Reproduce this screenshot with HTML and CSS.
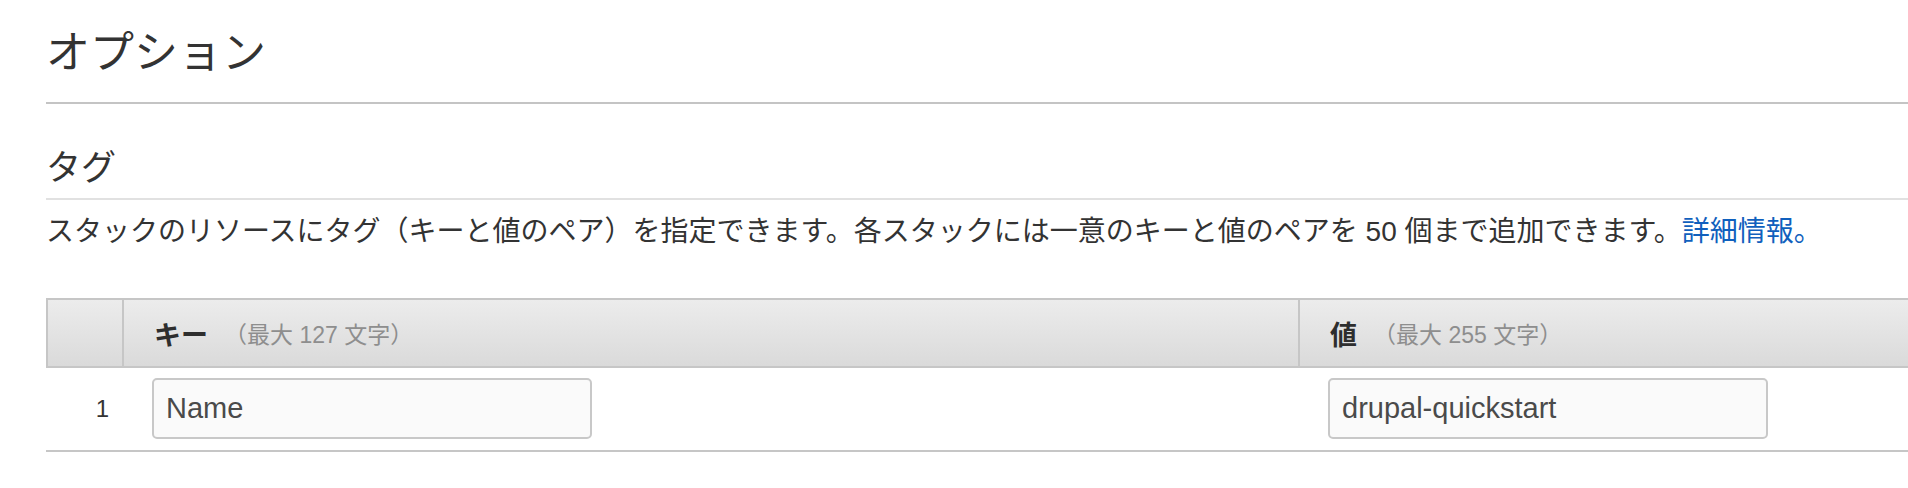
FILE: index.html
```html
<!DOCTYPE html>
<html lang="ja">
<head>
  <meta charset="UTF-8">
  <title>オプション</title>
  <link rel="stylesheet" href="styles.css">
</head>
<body>
  <div class="page">
    <h1 class="page-title">オプション</h1>

    <h2 class="section-title">タグ</h2>
    <p class="section-desc">スタックのリソースにタグ（キーと値のペア）を指定できます。各スタックには一意のキーと値のペアを 50 個まで追加できます。<a href="#" class="more-link">詳細情報。</a></p>

    <div class="tag-table">
      <div class="tag-head">
        <div class="cell"></div>
        <div class="cell"><span class="col-name">キー</span><span class="col-hint">（最大 127 文字）</span></div>
        <div class="cell"><span class="col-name">値</span><span class="col-hint">（最大 255 文字）</span></div>
      </div>
      <div class="tag-row">
        <div class="cell row-num">1</div>
        <div class="cell"><input type="text" class="tag-input" value="Name"></div>
        <div class="cell"><input type="text" class="tag-input" value="drupal-quickstart"></div>
      </div>
    </div>
  </div>
</body>
</html>
```

FILE: styles.css
```css
html, body {
  margin: 0;
  overflow: hidden;
  background: #fff;
}

body {
  font-family: "Liberation Sans", "Noto Sans CJK JP", sans-serif;
  color: #333;
}

.page {
  padding-left: 46px;
}

.page-title {
  margin: 27px 0 0;
  padding-bottom: 23px;
  font-size: 44px;
  line-height: 52px;
  font-weight: normal;
  border-bottom: 2px solid #c4c4c4;
}

.section-title {
  margin: 44px 0 0;
  padding-bottom: 10px;
  font-size: 35px;
  line-height: 40px;
  font-weight: normal;
  border-bottom: 2px solid #e1e1e1;
}

.section-desc {
  margin: 14px 0 0;
  font-size: 28px;
  line-height: 36px;
}

.more-link {
  color: #1060bd;
  text-decoration: none;
}

.tag-table {
  margin-top: 48px;
  width: 2430px;
}

.tag-head, .tag-row {
  display: grid;
  grid-template-columns: 74px 1176px 1176px;
}

.tag-head {
  height: 70px;
  box-sizing: border-box;
  border: 2px solid #c6c6c6;
  background: linear-gradient(#ececec, #dadada);
}

.tag-head .cell {
  display: flex;
  align-items: center;
  padding-left: 30px;
}

.tag-head .cell + .cell {
  border-left: 2px solid #c6c6c6;
}

.col-name {
  font-size: 27px;
  font-weight: bold;
  color: #2e2e2e;
}

.col-hint {
  margin-left: 16px;
  font-size: 23px;
  color: #8e8e8e;
}

.tag-row {
  height: 84px;
  box-sizing: border-box;
  border-bottom: 2px solid #c6c6c6;
}

.tag-row .cell {
  display: flex;
  align-items: center;
  padding-left: 32px;
  padding-bottom: 1px;
}

.tag-row .row-num {
  justify-content: flex-end;
  padding-left: 0;
  padding-right: 11px;
  font-size: 24px;
}

.tag-input {
  width: 440px;
  height: 61px;
  box-sizing: border-box;
  padding: 0 12px;
  border: 2px solid #c8c8c8;
  border-radius: 5px;
  background: #fafafa;
  font-family: "Liberation Sans", sans-serif;
  font-size: 29px;
  color: #4a4a4a;
}
```
